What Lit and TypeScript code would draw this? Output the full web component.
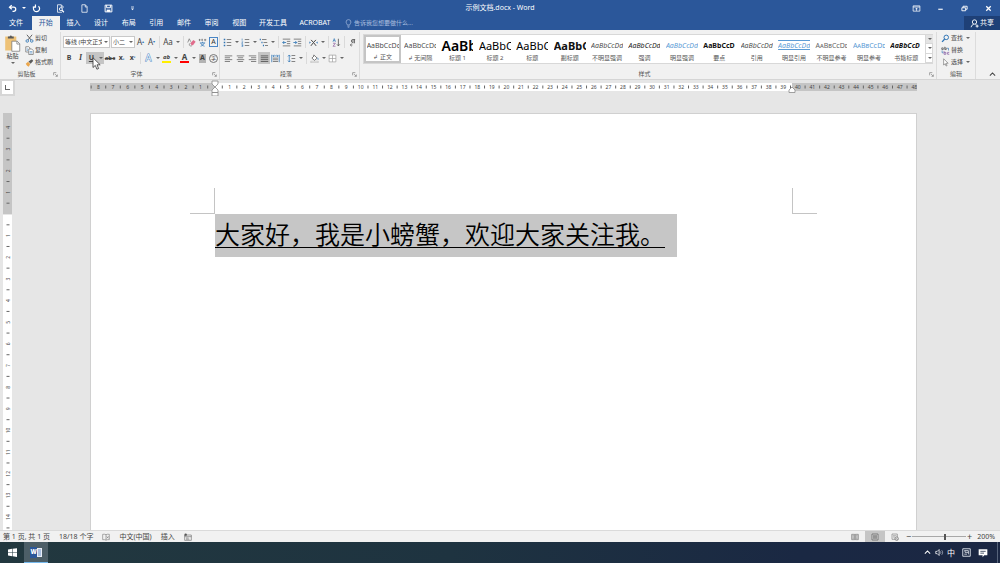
import { LitElement, html, svg, css, nothing } from "lit";
import { customElement, property } from "lit/decorators.js";

const B = "#2e74b5";
const G = "#5f5f5f";

const lines = (ys: number[], x1: number, x2: number, c = G) =>
  ys.map((y) => svg`<path d="M${x1} ${y}H${x2}" stroke=${c} fill="none"/>`);

/* Glyphs are drawn on a 12 x 12 grid. */
const glyphs: Record<string, unknown> = {
  undo: svg`<path d="M5 1.5 2 4.2 5 7M2.2 4.2H7.5a2.7 2.7 0 0 1 0 5.6H6" fill="none" stroke="currentColor" stroke-width="1.7"/>`,
  redo: svg`<path d="M3.2 3.2A4.1 4.1 0 1 0 8.6 3M4.6 .8v3.4H1" fill="none" stroke="currentColor" stroke-width="1.6"/>`,
  preview: svg`<path d="M8 11H2V1h5l2.500 2.500V5M7 1v3h2.500" fill="none" stroke="currentColor"/><circle cx="6.500" cy="6.800" r="2" fill="none" stroke="currentColor" stroke-width="1.200"/><path d="M8 8.300 10.500 11" stroke="currentColor" stroke-width="1.600"/>`,
  page: svg`<path d="M2.500 1H7l2.500 2.500V11h-7zM7 1v3h2.500" fill="none" stroke="currentColor"/>`,
  save: svg`<path d="M1.500 1.500h9v9h-9zM3.500 1.500v3.500h5V1.500" fill="none" stroke="currentColor" stroke-width="1.300"/><path d="M3.500 7.500h5v3h-5z" fill="currentColor"/>`,
  more: svg`<path d="M4 4h4" stroke="currentColor" stroke-width="1"/><path d="M4 6h4L6 8.400z" fill="currentColor"/>`,
  ribbonopt: svg`<path d="M1.500 2.500h9v7h-9zM1.500 4h9" fill="none" stroke="currentColor"/><path d="M6 9V5.600M4.500 7 6 5.400 7.500 7" fill="none" stroke="currentColor"/>`,
  min: svg`<path d="M3 7H9" stroke="currentColor" stroke-width="1.500"/>`,
  restore: svg`<path d="M2.500 5h5v4h-5zM4 5V3h5.500v4H7.500" fill="none" stroke="currentColor" stroke-width="1.200"/>`,
  close: svg`<path d="m3 3 6 6M9 3 3 9" stroke="currentColor" stroke-width="1.700"/>`,
  bulb: svg`<path d="M4.300 8C4.300 6.500 2.800 6 2.800 4a3.200 3.200 0 0 1 6.400 0c0 2-1.500 2.500-1.500 4zM4.500 9.500h3M5 11h2" fill="none" stroke="currentColor" stroke-width=".9"/>`,
  person: svg`<circle cx="6" cy="4" r="2.900" fill="none" stroke="currentColor" stroke-width="1.200"/><path d="M1.500 11C2 8.500 3.500 7.400 5 7M7.500 7l1.500 1.500M9.500 7.500v4M7.500 9.500h4" fill="none" stroke="currentColor" stroke-width="1.200"/>`,
  paste: svg`<path d="M.8 1.700h7.400V11H.8z" fill="#eec277"/><path d="M2.600 1.600h1.200a.8.8 0 0 1 1.500 0h1.200V3H2.600z" fill="#595959"/><path d="M5.200 4.800h3.600l1.700 1.700v5H5.200z" fill="#fff" stroke="#777" stroke-width=".5"/><path d="M8.600 4.800v1.900h1.900" fill="none" stroke="#777" stroke-width=".5"/>`,
  cut: svg`<path d="M2.500 1 8.200 8M9.500 1 3.800 8" stroke="#555" stroke-width="1.200"/><circle cx="3" cy="9.300" r="1.700" fill="none" stroke=${B} stroke-width="1.100"/><circle cx="9" cy="9.300" r="1.700" fill="none" stroke=${B} stroke-width="1.100"/>`,
  copy: svg`<path d="M1 1h4l1.500 1.500V8H1z" fill="#fff" stroke="#666" stroke-width=".9"/><path d="M5 4h4l2 2v5.300H5z" fill="#fff" stroke="#666" stroke-width=".9"/><path d="M6.300 7.500h3.400M6.300 9.300h3.400M2.200 4h2M2.200 5.800h2" stroke=${B} stroke-width=".8"/>`,
  brush: svg`<path d="m1 7.500 3-2.500 3 3-2 3.500C3.500 11 2 9.500 1 7.500z" fill="#eba64c"/><path d="m4.600 4.500 3 3L11 3.500 9 1.500z" fill="#5b5b5b"/>`,
  eraser: svg`<path d="m4.500 7 4-4.500 3 2.500-3.500 4.500H6z" fill="#e06c8b"/><path d="M4.500 7 2.500 8.700 4.500 10.500H6.500M1 6 3 1 5 5" fill="none" stroke="#777" stroke-width="1"/>`,
  phonetic: svg`<path d="M1 2.500h2.500M4.500 2.500h2M8 2.500h3M2 1.200v3M9.500 1.200v3M5.500 1v3" stroke="#666" stroke-width=".9"/><path d="M2.500 6.500h7M6 5v1.500M3.500 11C6 10 7.800 8.500 8.300 6.700M3.700 6.800C4.300 8.600 6 10.200 8.700 11" fill="none" stroke=${B} stroke-width="1"/>`,
  bullets: svg`${lines([2, 6, 10], 5, 11)}<path d="M1 1h2v2H1zM1 5h2v2H1zM1 9h2v2H1z" fill=${B}/>`,
  numbers: svg`${lines([2, 6, 10], 5, 11)}<path d="M1.500 3.500V.8M1 5h1.300L1 7.200h1.500M.8 8.800h1.600v2.500H.8M1 10h1.400" fill="none" stroke=${B} stroke-width=".8"/>`,
  multi: svg`${lines([2], 4, 10)}${lines([6], 6, 11)}${lines([10], 8, 12)}<path d="M1 1h1.500v2H1zM3.200 5h1.500v2H3.200zM5.200 9h1.500v2H5.200z" fill=${B}/>`,
  outdent: svg`${lines([1.5, 10.5], 1, 11)}${lines([4.5, 7.5], 6.5, 11)}<path d="M5.500 6H1M3 4 1 6l2 2" fill="none" stroke=${B} stroke-width="1.100"/>`,
  indent: svg`${lines([1.5, 10.5], 1, 11)}${lines([4.5, 7.5], 6.5, 11)}<path d="M.5 6H5M3 4l2 2-2 2" fill="none" stroke=${B} stroke-width="1.100"/>`,
  asian: svg`<path d="M6 6 2.500 10.500M6 6l3.500 4.500M2.800 2.500 6 6l3.200-3.500" fill="none" stroke="#444" stroke-width="1.300"/><path d="M.5 4.500v3L2.500 6zM11.500 4.500v3L9.500 6z" fill=${B}/>`,
  sort: svg`<path d="M1.300 5 3 .8 4.700 5M2 3.600h2" fill="none" stroke=${B} stroke-width=".9"/><path d="M1.300 7h3.200L1.300 11h3.400" fill="none" stroke="#8a5a9c" stroke-width=".9"/><path d="M8.500 1v9.500M6.700 8.500l1.800 2 1.800-2" fill="none" stroke="#555" stroke-width="1.100"/>`,
  mark: svg`<path d="M9.500 2H6.500a2 2 0 0 0 0 4M6.700 2v5M8.700 2v5" fill="none" stroke="#555" stroke-width="1.100"/><path d="M5 7.500 3 9.300 5 11M3 9.300h3" fill="none" stroke="#555" stroke-width=".9"/>`,
  left: svg`${lines([2.5, 7.5], 1, 11)}${lines([5, 10], 1, 8)}`,
  center: svg`${lines([2.5, 7.5], 1, 11)}${lines([5, 10], 2.5, 9.5)}`,
  right: svg`${lines([2.5, 7.5], 1, 11)}${lines([5, 10], 4, 11)}`,
  justify: svg`${lines([2.5, 5, 7.5, 10], 1, 11, "#444")}`,
  distribute: svg`<path d="M1 1v10M11 1v10" stroke=${B}/>${lines([5.5, 7.7, 10], 2.5, 9.5)}<path d="M2.500 2.500h7M4 1 2.500 2.500 4 4M8 1l1.500 1.500L8 4" fill="none" stroke=${B} stroke-width=".9"/>`,
  spacing: svg`${lines([2, 6, 10], 6, 11)}<path d="M3 1.500v9M1.300 3.200 3 1.300l1.700 1.900M1.300 8.800 3 10.700l1.700-1.900" fill="none" stroke=${B} stroke-width="1"/>`,
  fill: svg`<path d="M2.500 5.500 6 2l3.500 3.500L6 8.500zM5 3V1" fill="#fff" stroke="#555" stroke-width="1"/><path d="M10 5c1 1.500 1.200 2 .6 2.700" fill="none" stroke=${B}/><path d="M1 9.700h10v1.800H1z" fill="#fff" stroke="#999" stroke-width=".6"/>`,
  borders: svg`<path d="M1.500 1.500h9v9h-9zM6 1.500v9M1.500 6h9" fill="#fff" stroke="#9a9a9a" stroke-width=".9"/>`,
  find: svg`<circle cx="7" cy="4.500" r="3" fill="none" stroke=${B} stroke-width="1.300"/><path d="M4.800 6.800 1.500 10.500" stroke=${B} stroke-width="1.900"/>`,
  replace: svg`<path d="M1 4.500V2.500h2v2.200H1M5 1v3.700h2V2.600H5" fill="none" stroke="#444" stroke-width=".9"/><path d="M4 8.500h2.500V11H4V6.800M11 8.500H8.800V11H11" fill="none" stroke="#7b4f9b" stroke-width=".9"/><path d="M1.500 6v3H3M8 3h2v3" fill="none" stroke=${B} stroke-width=".9"/>`,
  select: svg`<path d="M3.500 1v8.500l2-2 1.300 3.200 1.300-.6L6.800 7H9.500z" fill="#fff" stroke="#666" stroke-width=".8"/>`,
  launch: svg`<path d="M1.500 8V1.500H8M5 5l5 5M10.500 6v4.500H6" fill="none" stroke="#777" stroke-width="1.500"/>`,
  up: svg`<path d="m2.500 7.500 3.500-3.500 3.500 3.500" fill="none" stroke="currentColor" stroke-width="1.400"/>`,
  book: svg`<path d="M6 2.500C4.500 1.700 2.800 1.700 1 2v8c2-.3 3.500 0 5 .8 1.500-.8 3-1.100 5-.8V2c-1.800-.3-3.500-.3-5 .5zM6 2.500v8" fill="none" stroke="#777" stroke-width=".9"/><path d="m7 5 3 3M10 5 7 8" stroke="#666" stroke-width=".8"/>`,
  macro: svg`<path d="M1 3h10v8H1zM1 5.500h10M3 7.500h4M3 9.300h5" fill="none" stroke="#666" stroke-width=".9"/><circle cx="2.500" cy="2.500" r="1.800" fill="#555"/>`,
  read: svg`<path d="M1 2h4.600v8H1zM6.400 2H11v8H6.400z" fill="#e2e2e2" stroke="#777" stroke-width="1"/><path d="M2 4h2.500M2 6h2.500M2 8h2.500M7.500 4H10M7.500 6H10M7.500 8H10" stroke="#777" stroke-width=".8"/>`,
  print: svg`<path d="M1.500 1.500h9v9h-9z" fill="#ddd" stroke="#555" stroke-width="1"/>${lines([3.5, 5.2, 6.9, 8.6], 3, 9, "#666")}`,
  web: svg`<path d="M1.500 1.500h8v8h-8z" fill="#eee" stroke="#777" stroke-width=".9"/><path d="M3 4h5M3 6h3" stroke="#888" stroke-width=".9"/><circle cx="8.500" cy="8.500" r="2.700" fill="#ddd" stroke="#666" stroke-width=".9"/><path d="M6.500 7.500 10.500 10" stroke="#777" stroke-width=".7"/>`,
  windows: svg`<path d="M0 1.900 5.500 1.100v4.600H0zM6.200 1 12 .2v5.500H6.200zM0 6.400h5.500v4.500L0 10.100zM6.200 6.400H12v5.500L6.200 11z" fill="#fff"/>`,
  speaker: svg`<path d="M1 4.500h2L5.500 2v8L3 7.500H1z" fill="none" stroke="#fff" stroke-width="1"/><path d="M7.200 4.500c.8 1 .8 2 0 3M9 3c1.500 2 1.500 4 0 6" fill="none" stroke="#cdd3dc" stroke-width=".9"/>`,
  ime: svg`<path d="M1 1h10v10H1z" fill="none" stroke="#dfe4ec" stroke-width="1.200"/><path d="M3 3.500h5.500v5M4 3.500v2.300h4.500M3 8.200h3.700" fill="none" stroke="#dfe4ec" stroke-width="1.100"/>`,
  message: svg`<path d="M.8 1.500h10.400v7.300H7.500L5.500 11V8.800H.8z" fill="#fff"/><path d="M2.800 4h6.400M2.800 6.200h4.400" stroke="#1b2943" stroke-width=".9"/>`,
};

@customElement("w-icon")
class WIcon extends LitElement {
  @property() name = "";
  static styles = css`
    :host { display: block; width: 9px; height: 9px; flex: none; }
    svg { display: block; width: 100%; height: 100%; }
  `;
  render() {
    return html`<svg viewBox="0 0 12 12" aria-hidden="true">${glyphs[this.name]}</svg>`;
  }
}

@customElement("w-ruler")
class WRuler extends LitElement {
  @property({ type: Boolean }) vertical = false;
  static styles = css`
    :host { display: block; }
    svg { display: block; }
    text { font-family: "Noto Sans", sans-serif; font-size: 5px; fill: #444; text-anchor: middle; }
    .dark { fill: #c5c5c5; }
    .light { fill: #fff; }
    .tick { stroke: #666; stroke-width: 1; }
    .stop { fill: #fdfdfd; stroke: #8a8a8a; stroke-width: 0.8; }
  `;
  render() {
    return this.vertical ? this.column() : this.row();
  }
  row() {
    const step = 14.57;
    const zero = 125;
    const marks = [];
    for (let n = -8; n <= 48; n++) {
      if (n !== 0) marks.push(svg`<text x=${zero + n * step} y="9">${Math.abs(n)}</text>`);
      marks.push(svg`<path class="tick" d="M${zero + (n - 0.5) * step} 5.500v3"/>`);
    }
    return html`<svg width="827" height="16">
      <rect class="dark" y="3" width="827" height="8"/>
      <rect class="light" x=${zero} y="3" width="577" height="8"/>
      ${marks}
      <path class="stop" d="M122 1h6v3l-3 3-3-3zM122 12.500V10l3-3 3 3v2.500zM122 12.500h6V16h-6z"/>
      <path class="stop" d="M699 12.500V10l3-3 3 3v2.500z"/>
    </svg>`;
  }
  column() {
    const step = 21.65;
    const zero = 101;
    const marks = [];
    for (let n = -4; n <= 14; n++) {
      const y = zero + n * step;
      if (n !== 0) marks.push(svg`<text transform="translate(7 ${y}) rotate(-90)">${Math.abs(n)}</text>`);
      marks.push(svg`<path class="tick" d="M3.500 ${y + step / 2}h3"/>`);
    }
    return html`<svg width="9" height="417">
      <rect class="dark" width="9" height="101"/>
      <rect class="light" y="102" width="9" height="315"/>
      ${marks}
    </svg>`;
  }
}

const tabs = ["开始", "插入", "设计", "布局", "引用", "邮件", "审阅", "视图"];

const styleItems: [string, string, string][] = [
  ["AaBbCcDd", "↲ 正文", "thin"],
  ["AaBbCcDd", "↲ 无间隔", "thin"],
  ["AaBb", "标题 1", "h1"],
  ["AaBbC", "标题 2", "h2"],
  ["AaBbC", "标题", "h2"],
  ["AaBbC", "副标题", "h2 strong"],
  ["AaBbCcDd", "不明显强调", "thin slant"],
  ["AaBbCcDd", "强调", "slant"],
  ["AaBbCcDd", "明显强调", "slant blue"],
  ["AaBbCcD", "要点", "strong"],
  ["AaBbCcDd", "引用", "thin slant"],
  ["AaBbCcDd", "明显引用", "slant blue ruled"],
  ["AaBbCcDd", "不明显参考", "caps"],
  ["AaBbCcDd", "明显参考", "caps blue"],
  ["AaBbCcD", "书籍标题", "strong slant"],
];

@customElement("app-root")
class AppRoot extends LitElement {
  static styles = css`
    :host {
      display: flex; flex-direction: column; height: 100vh; overflow: hidden;
      font-family: "Noto Sans", "Noto Sans CJK SC", sans-serif;
      font-size: 6px; line-height: 8px; color: #444; background: #e6e6e6;
    }
    * { box-sizing: border-box; }
    button, select, input {
      font: inherit; color: inherit; border: 0; background: none; padding: 0; margin: 0; border-radius: 0;
      appearance: none; outline: none; white-space: nowrap;
    }
    button { display: flex; align-items: center; justify-content: center; }

    .title { display: grid; grid-template-columns: 1fr auto 1fr; height: 16px; align-items: center; background: #2b579a; color: #fff; font-size: 7px; flex: none; }
    .quick { display: flex; align-items: center; }
    .quick button { width: 24px; height: 16px; }
    .quick .narrow { width: 4px; margin: 0 -2px; }
    .quick .narrow::after { border-top-color: #fff; }
    .winbtns { display: flex; justify-content: flex-end; }
    .winbtns button { width: 24px; height: 16px; }

    .tabs { display: flex; height: 14px; background: #2b579a; color: #fff; flex: none; font-size: 7px; }
    .tabs a { display: flex; align-items: center; justify-content: center; color: inherit; text-decoration: none; height: 14px; }
    .file { width: 32px; }
    .main { display: flex; width: 221px; }
    .main a { flex: 1; }
    .main .on { background: #f1f1f1; color: #2b579a; }
    .dev { width: 40px; }
    .acro { width: 44px; }
    .tell { gap: 1px; margin-left: 7px; color: #a9bedf; font-size: 6px; }
    .share { margin-left: auto; width: 36px; background: #1e4077; gap: 1px; color: #fff; }

    .ribbon { display: flex; height: 50px; padding-top: 2px; background: #f1f1f1; border-bottom: 1px solid #d5d5d5; flex: none; }
    .group { display: flex; flex-direction: column; border-right: 1px solid #dcdcdc; }
    .body { height: 36px; }
    .caption { display: flex; align-items: center; height: 11px; padding: 1px 2px 0 0; color: #555; }
    .caption span { flex: 1; text-align: center; }
    .caption w-icon { width: 5px; height: 5px; }
    .row { display: flex; align-items: center; height: 16px; }
    .two { padding: 2px 0 0 2px; }
    .clip { width: 61px; }
    .clip .body { display: grid; grid-template-columns: 25px 1fr; }
    .pastebtn { flex-direction: column; justify-content: flex-start; padding-top: 2px; }
    .pastebtn w-icon { width: 18px; height: 18px; }
    .pastebtn .caret { height: 6px; }
    .stack { display: grid; grid-template-rows: repeat(3, 12px); }
    .stack button { justify-content: flex-start; gap: 1px; }
    .font { width: 159px; }
    .para { width: 140px; }
    .styles { flex: 1; }
    .edit { width: 39px; padding-left: 4px; }
    .edit .caption { padding: 1px 4px 0 0; }
    .tail { width: 24px; display: flex; align-items: flex-end; justify-content: flex-end; padding: 0 3px 0 0; }

    .pick { display: flex; height: 12px; background: #fff; border: 1px solid #c8c8c8; align-items: center; padding-left: 1px; }
    .pick select { flex: 1; min-width: 0; height: 10px; overflow: hidden; }
    .face { width: 47px; }
    .size { width: 25px; margin-left: 1px; }
    .caret { width: 7px; height: 12px; display: flex; align-items: center; justify-content: center; flex: none; }
    .caret::after { content: ""; border: 0 solid transparent; border-top-color: #666; border-width: 2px 2px 0; }
    .ib { width: 12px; height: 12px; flex: none; }
    .ic { width: 11px; height: 12px; flex: none; }
    .sep { width: 1px; height: 12px; margin: 0 2px; background: #dadada; flex: none; }
    .held { background: #c5c5c5; }
    .underbtn { position: relative; text-decoration: underline; font-weight: 700; font-size: 7px; }
    .pointer { position: absolute; left: 6px; top: 5px; width: 9px; height: 13px; z-index: 2; }
    .bold { font-weight: 700; font-size: 7px; }
    .ital { font-style: italic; font-family: "Liberation Serif", serif; font-size: 8px; font-weight: 700; }
    .strike { text-decoration: line-through; font-weight: 700; }
    sub, sup { font-size: 4px; line-height: 4px; color: #2e74b5; }
    .grow { font-size: 8px; }
    .letter { font-size: 9px; }
    .glow { color: #fff; -webkit-text-stroke: 1px #4a86c5; paint-order: stroke; }
    .yellow { border-bottom: 2px solid #ffef00; height: 10px; width: 9px; font-style: italic; font-weight: 700; }
    .red { border-bottom: 2px solid #f00; height: 10px; width: 9px; font-weight: 700; font-size: 8px; }
    .shaded { background: #b3b3b3; width: 7px; height: 9px; font-weight: 700; font-size: 7px; }
    .boxed { border: 1px solid #4a86c5; width: 9px; height: 10px; font-size: 7px; color: #333; }
    .ring { border: 1px solid #777; border-radius: 50%; width: 9px; height: 9px; font-size: 5px; }
    .ring, .boxed, .shaded, .yellow, .red { display: flex; align-items: center; justify-content: center; }

    .gallery { display: flex; height: 30px; margin: 2px 3px 0 3px; background: #fff; border: 1px solid #d8d8d8; }
    .list { flex: 1; display: grid; grid-template-columns: repeat(15, minmax(0, 1fr)); }
    .list button { flex-direction: column; height: 28px; padding: 2px 2px 0; }
    .list .picked { border: 2px solid #c5c5c5; padding: 1px 0 0; }
    .sample { width: 32px; height: 16px; line-height: 16px; overflow: hidden; text-align: left; color: #222; font-size: 7px; }
    .name { height: 8px; color: #555; }
    .thin { font-family: "Open Sans", sans-serif; color: #444; }
    .h1 { font-size: 14px; font-weight: 600; color: #000; }
    .h2 { font-size: 11px; color: #000; }
    .strong { font-weight: 700; color: #111; }
    .slant { font-style: italic; }
    .blue { color: #5b9bd5; }
    .ruled { text-decoration: underline overline; text-decoration-thickness: 1px; }
    .caps { font-variant: small-caps; }
    .caps:not(.blue) { color: #666; }
    .scroll { display: grid; grid-template-rows: repeat(3, 1fr); width: 7px; border-left: 1px solid #d8d8d8; }
    .scroll button { height: auto; overflow: hidden; border-bottom: 1px solid #d8d8d8; }
    .scroll .off { background: #e4e4e4; }

    .hrule { display: flex; height: 16px; flex: none; }
    .corner { width: 15px; height: 16px; border: 2px solid #d6d6d6; border-top-width: 1px; background: #fff; display: flex; align-items: center; justify-content: center; }
    .corner::after { content: ""; width: 4px; height: 4px; border: solid #666; border-width: 0 0 1px 1px; }
    .hrule w-ruler { margin-left: 75px; }
    .desk { flex: 1; min-height: 0; display: grid; grid-template-columns: 14px 1fr; overflow: hidden; }
    .desk w-ruler { padding: 17px 0 0 3px; }
    .sheet { margin: 17px 83px 0 76px; background: #fff; border: 1px solid #d0d0d0; border-bottom: 0; padding-top: 74px; }
    .crops { display: flex; justify-content: space-between; padding: 0 99px; height: 26px; }
    .crops i { width: 25px; border: 0 solid #c4c4c4; border-bottom-width: 1px; }
    .crops i:first-child { border-right-width: 1px; }
    .crops i:last-child { border-left-width: 1px; }
    .line { margin: 0 0 0 124px; width: max-content; height: 43px; line-height: 38px; padding-right: 12px; background: #c6c6c6; color: #000;
      font-family: "Noto Sans CJK SC", sans-serif; font-weight: 350; font-size: 25px; }
    .line u { text-decoration-thickness: 1px; text-underline-offset: 3px; text-decoration-skip-ink: none; }

    .status { display: flex; align-items: center; height: 12px; background: #f1f1f1; padding: 0 5px 0 3px; flex: none; font-size: 7px; border-top: 1px solid #dadada; }
    .status .info { display: flex; align-items: center; gap: 9px; }
    .view { display: flex; margin-left: auto; }
    .view button { width: 20px; height: 11px; }
    .view w-icon, .info w-icon { width: 8px; height: 8px; }
    .zoom { display: flex; align-items: center; gap: 1px; margin-left: 1px; }
    .zoom button { width: 5px; font-size: 9px; height: 11px; }
    .zoom input { width: 54px; height: 11px; background: linear-gradient(#a8a8a8, #a8a8a8) center / 100% 1px no-repeat; }
    .zoom input::-webkit-slider-thumb { appearance: none; width: 2px; height: 6px; background: #555; }
    .pct { width: 22px; text-align: right; }

    .task { display: flex; align-items: stretch; height: 21px; background: linear-gradient(90deg, #22383f, #1e3340 45%, #1a2843 80%, #1b2743); color: #fff; flex: none; }
    .task button { width: 24px; }
    .task .app { background: #4c5e67; border-bottom: 1px solid #76b9ed; }
    .wordmark { width: 12px; height: 11px; display: grid; grid-template-columns: 7px 5px; font-size: 6px; font-weight: 700; line-height: 11px; }
    .wordmark b { background: #2b579a; }
    .wordmark i { background: #a9bfe0; border: 1px solid #e9eef7; margin: 1px 0; }
    .tray { display: flex; margin-left: auto; align-items: center; border-right: 1px solid #56637a; margin-right: 2px; padding-right: 6px; }
    .tray button { width: 12px; height: 20px; }
    .tray .ch { font-size: 8px; }
    .tray .gap { width: 18px; }
    .tray .end { width: 16px; }
    .tray .end w-icon { width: 10px; height: 10px; }
  `;

  icon(name: string, label: string, cls = "ib") {
    return html`<button class=${cls} aria-label=${label}><w-icon name=${name}></w-icon></button>`;
  }
  caret(label: string, cls = "") {
    return html`<button class="caret ${cls}" aria-label=${label}></button>`;
  }
  caption(text: string, launch = true) {
    return html`<div class="caption"><span>${text}</span>${launch
      ? html`<button aria-label="${text}设置"><w-icon name="launch"></w-icon></button>` : nothing}</div>`;
  }

  render() {
    const sep = html`<span class="sep"></span>`;
    return html`
      <header class="title">
        <div class="quick">
          ${this.icon("undo", "撤消", "")}
          ${this.caret("撤消列表", "narrow")}
          ${this.icon("redo", "重复", "")}
          ${this.icon("preview", "打印预览", "")}
          ${this.icon("page", "新建", "")}
          ${this.icon("save", "保存", "")}
          ${this.icon("more", "自定义", "")}
        </div>
        <div>示例文档.docx - Word</div>
        <div class="winbtns">
          ${this.icon("ribbonopt", "功能区显示选项", "")}
          ${this.icon("min", "最小化", "")}
          ${this.icon("restore", "还原", "")}
          ${this.icon("close", "关闭", "")}
        </div>
      </header>

      <nav class="tabs">
        <a class="file" href="#">文件</a>
        <div class="main">${tabs.map((t, i) => html`<a href="#" class=${i === 0 ? "on" : ""}>${t}</a>`)}</div>
        <a class="dev" href="#">开发工具</a>
        <a class="acro" href="#">ACROBAT</a>
        <button class="tell"><w-icon name="bulb"></w-icon>告诉我您想要做什么...</button>
        <button class="share"><w-icon name="person"></w-icon>共享</button>
      </nav>

      <section class="ribbon">
        <div class="group clip">
          <div class="body">
            <button class="pastebtn"><w-icon name="paste"></w-icon>粘贴<span class="caret"></span></button>
            <div class="stack">
              <button><w-icon name="cut"></w-icon>剪切</button>
              <button><w-icon name="copy"></w-icon>复制</button>
              <button><w-icon name="brush"></w-icon>格式刷</button>
            </div>
          </div>
          ${this.caption("剪贴板")}
        </div>

        <div class="group font">
          <div class="body two">
            <div class="row">
              <label class="pick face"><select aria-label="字体"><option>等线 (中文正文)</option></select><span class="caret"></span></label>
              <label class="pick size"><select aria-label="字号"><option>小二</option></select><span class="caret"></span></label>
              <button class="ic grow" aria-label="增大字号">A<sup>▴</sup></button>
              <button class="ic grow" aria-label="减小字号">A<sup>▾</sup></button>
              ${sep}
              <button class="ib grow" aria-label="更改大小写">Aa</button>${this.caret("大小写列表")}
              ${sep}
              ${this.icon("eraser", "清除格式", "ic")}
              ${this.icon("phonetic", "拼音指南", "ic")}
              <button class="ic" aria-label="字符边框"><span class="boxed">A</span></button>
            </div>
            <div class="row">
              <button class="ib bold">B</button>
              <button class="ic ital">I</button>
              <button class="ic held underbtn">U
                <svg class="pointer" viewBox="0 0 9 13" aria-hidden="true"><path d="M1 .8v9.700l2.300-2.100 1.600 3.800 1.700-.7L5 7.800h3.200z" fill="#fff" stroke="#333" stroke-width=".8"/></svg>
              </button>${this.caret("下划线列表", "held")}
              <button class="ib strike">abc</button>
              <button class="ic bold">x<sub>₂</sub></button>
              <button class="ic bold">x<sup>²</sup></button>
              ${sep}
              <button class="ic" aria-label="文本效果"><span class="letter glow">A</span></button>${this.caret("文本效果列表")}
              <button class="ic" aria-label="突出显示"><span class="yellow">ab</span></button>${this.caret("突出显示列表")}
              <button class="ic" aria-label="字体颜色"><span class="red">A</span></button>${this.caret("字体颜色列表")}
              <button class="ic" aria-label="字符底纹"><span class="shaded">A</span></button>
              <button class="ic" aria-label="带圈字符"><span class="ring">字</span></button>
            </div>
          </div>
          ${this.caption("字体")}
        </div>

        <div class="group para">
          <div class="body two">
            <div class="row">
              ${this.icon("bullets", "项目符号", "ic")}${this.caret("项目符号列表")}
              ${this.icon("numbers", "编号", "ic")}${this.caret("编号列表")}
              ${this.icon("multi", "多级列表", "ic")}${this.caret("多级列表库")}
              ${sep}
              ${this.icon("outdent", "减少缩进", "ic")}
              ${this.icon("indent", "增加缩进", "ic")}
              ${sep}
              ${this.icon("asian", "中文版式", "ic")}${this.caret("中文版式列表")}
              ${sep}
              ${this.icon("sort", "排序", "ic")}
              ${sep}
              ${this.icon("mark", "编辑标记", "ic")}
            </div>
            <div class="row">
              ${this.icon("left", "左对齐")}
              ${this.icon("center", "居中")}
              ${this.icon("right", "右对齐")}
              ${this.icon("justify", "两端对齐", "ib held")}
              ${this.icon("distribute", "分散对齐", "ic")}
              ${sep}
              ${this.icon("spacing", "行距", "ic")}${this.caret("行距列表")}
              ${sep}
              ${this.icon("fill", "底纹", "ic")}${this.caret("底纹列表")}
              ${this.icon("borders", "边框", "ic")}${this.caret("边框列表")}
            </div>
          </div>
          ${this.caption("段落")}
        </div>

        <div class="group styles">
          <div class="body">
            <div class="gallery">
              <div class="list">
                ${styleItems.map(([s, n, c], i) => html`<button class=${i === 0 ? "picked" : ""}>
                  <span class="sample ${c}">${s}</span><span class="name">${n}</span></button>`)}
              </div>
              <div class="scroll">
                ${this.caret("向上", "off")}${this.caret("向下")}${this.caret("其他")}
              </div>
            </div>
          </div>
          ${this.caption("样式")}
        </div>

        <div class="group edit">
          <div class="body stack">
            <button><w-icon name="find"></w-icon>查找<span class="caret"></span></button>
            <button><w-icon name="replace"></w-icon>替换</button>
            <button><w-icon name="select"></w-icon>选择<span class="caret"></span></button>
          </div>
          ${this.caption("编辑", false)}
        </div>
        <div class="tail"><button aria-label="折叠功能区"><w-icon name="up"></w-icon></button></div>
      </section>

      <div class="hrule"><div class="corner"></div><w-ruler></w-ruler></div>

      <main class="desk">
        <w-ruler vertical></w-ruler>
        <article class="sheet">
          <div class="crops"><i></i><i></i></div>
          <p class="line"><u>大家好，我是小螃蟹，欢迎大家关注我。</u></p>
        </article>
      </main>

      <footer class="status">
        <div class="info">
          <span>第 1 页, 共 1 页</span>
          <span>18/18 个字</span>
          <w-icon name="book"></w-icon>
          <span>中文(中国)</span>
          <span>插入</span>
          <w-icon name="macro"></w-icon>
        </div>
        <div class="view">
          ${this.icon("read", "阅读视图", "")}
          ${this.icon("print", "页面视图", "held")}
          ${this.icon("web", "Web 版式", "")}
        </div>
        <div class="zoom">
          <button aria-label="缩小">−</button>
          <input type="range" aria-label="显示比例" min="0" max="100" value="62">
          <button aria-label="放大">+</button>
          <span class="pct">200%</span>
        </div>
      </footer>

      <footer class="task">
        ${this.icon("windows", "开始", "")}
        <button class="app" aria-label="Word"><span class="wordmark"><b>W</b><i></i></span></button>
        <div class="tray">
          ${this.icon("up", "显示隐藏的图标", "")}
          ${this.icon("speaker", "音量", "")}
          <button class="ch">中</button>
          ${this.icon("ime", "输入法", "gap")}
          ${this.icon("message", "通知", "end")}
        </div>
      </footer>
    `;
  }
}
